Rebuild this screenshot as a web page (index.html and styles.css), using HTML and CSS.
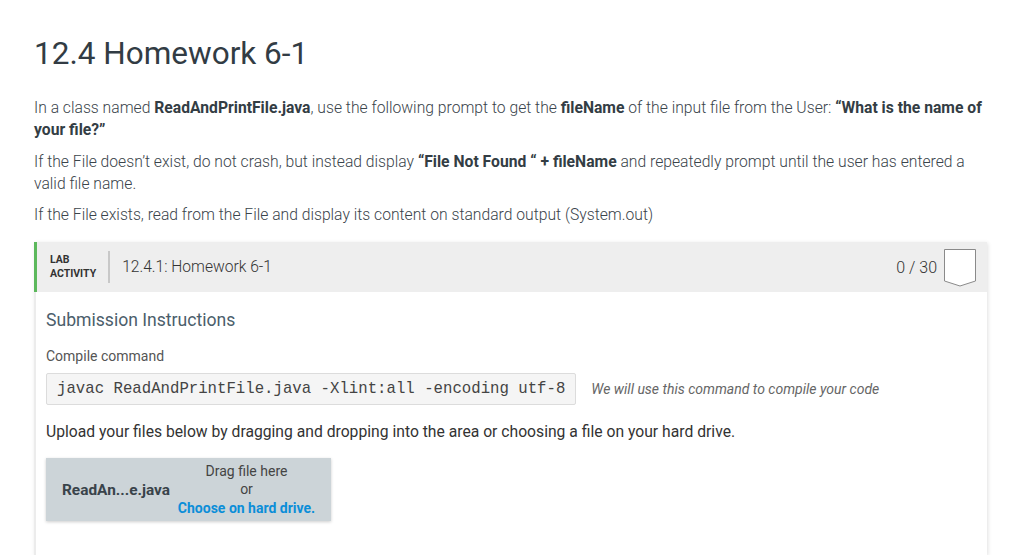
FILE: index.html
```html
<!DOCTYPE html>
<html lang="en">
<head>
  <meta charset="UTF-8">
  <title>12.4 Homework 6-1</title>
  <meta name="viewport" content="width=device-width, initial-scale=1.0">
  <link rel="stylesheet" href="styles.css">
</head>
<body>

  <div class="page">
    <h1>12.4 Homework 6-1</h1>

    <p>In a class named <b>ReadAndPrintFile.java</b>, use the following prompt to get the <b>fileName</b> of the input file from the User: <b>“What is the name of your file?”</b></p>
    <p>If the File doesn’t exist, do not crash, but instead display <b>“File Not Found “ + fileName</b> and repeatedly prompt until the user has entered a valid file name.</p>
    <p>If the File exists, read from the File and display its content on standard output (System.out)</p>

    <div class="lab">
      <div class="lab-header">
        <div class="lab-tag">LAB<br>ACTIVITY</div>
        <div class="lab-title">12.4.1: Homework 6-1</div>
        <div class="lab-score">0 / 30</div>
        <svg class="badge" width="34" height="44" viewBox="0 0 34 44">
          <path d="M1.5 1.5 H32.5 V33 L17 38 L1.5 33 Z" fill="#fff" stroke="#8a8a8a" stroke-width="1"/>
        </svg>
      </div>

      <div class="lab-body">
        <h2>Submission Instructions</h2>
        <div class="label">Compile command</div>
        <div class="compile">
          <code>javac ReadAndPrintFile.java -Xlint:all -encoding utf-8</code>
          <span class="hint">We will use this command to compile your code</span>
        </div>
        <p class="upload-text">Upload your files below by dragging and dropping into the area or choosing a file on your hard drive.</p>

        <div class="dropzone">
          <div class="file-name">ReadAn...e.java</div>
          <div class="drop-text">
            Drag file here<br>
            or<br>
            <a href="#">Choose on hard drive.</a>
          </div>
        </div>
      </div>
    </div>
  </div>

</body>
</html>
```

FILE: styles.css
```css
body {
  margin: 0;
  font-family: Roboto, "Noto Sans", sans-serif;
  background: #fff;
  color: #3c474e;
}
.page {
  padding: 18px 37px 0 34px;
}
h1 {
  font-size: 31.5px;
  font-weight: 400;
  color: #323c44;
  margin: 16px 0 23px;
  line-height: 40px;
}
p {
  font-size: 15.7px;
  font-weight: 300;
  line-height: 22px;
  margin: 0 0 9.5px;
  color: #3a444b;
}
p b {
  font-weight: 700;
  color: #333d44;
}
.lab {
  margin-top: 16px;
  box-shadow: 1px 1px 4px rgba(0,0,0,0.12);
}
.lab-header {
  display: flex;
  align-items: center;
  height: 50px;
  background: #eeeeee;
  border-left: 3px solid #5cb85c;
  padding: 0 10px 0 13px;
}
.lab-tag {
  font-size: 10.5px;
  font-weight: 700;
  line-height: 14px;
  color: #333;
  padding-right: 12px;
  border-right: 2px solid #c8c8c8;
  height: 32px;
  display: flex;
  align-items: center;
}
.lab-title {
  flex: 1;
  font-size: 15.6px;
  font-weight: 300;
  color: #333;
  padding-left: 12px;
}
.lab-score {
  font-size: 16px;
  font-weight: 300;
  color: #333;
  margin-right: 6px;
}
.badge {
  display: block;
  margin-top: 5px;
}
.lab-body {
  border-left: 2px solid #ececec;
  padding: 18px 10px 34px 10px;
}
h2 {
  font-size: 17.6px;
  font-weight: 400;
  color: #4b5e6b;
  margin: 0 0 18px;
}
.label {
  font-size: 14px;
  color: #555;
  margin-bottom: 9px;
}
.compile {
  display: flex;
  align-items: center;
  gap: 15px;
}
code {
  font-family: "Liberation Mono", monospace;
  font-size: 15.7px;
  color: #444;
  background: #f5f5f5;
  border: 1px solid #dcdcdc;
  border-radius: 2px;
  padding: 6px 10px 6px;
}
.hint {
  font-size: 14px;
  font-style: italic;
  color: #666;
}
.upload-text {
  font-weight: 400;
  color: #333;
  margin: 16px 0 15px;
}
.dropzone {
  display: flex;
  align-items: center;
  width: 285px;
  height: 63px;
  background: #ccd4d8;
  box-shadow: 0 1px 3px rgba(0,0,0,0.2);
}
.file-name {
  font-size: 15.4px;
  font-weight: 700;
  color: #39434a;
  padding-left: 16px;
  width: 100px;
}
.drop-text {
  flex: 1;
  text-align: center;
  font-size: 14px;
  line-height: 18.5px;
  color: #444;
}
.drop-text a {
  color: #0b8ed8;
  font-weight: 700;
  text-decoration: none;
}
```
